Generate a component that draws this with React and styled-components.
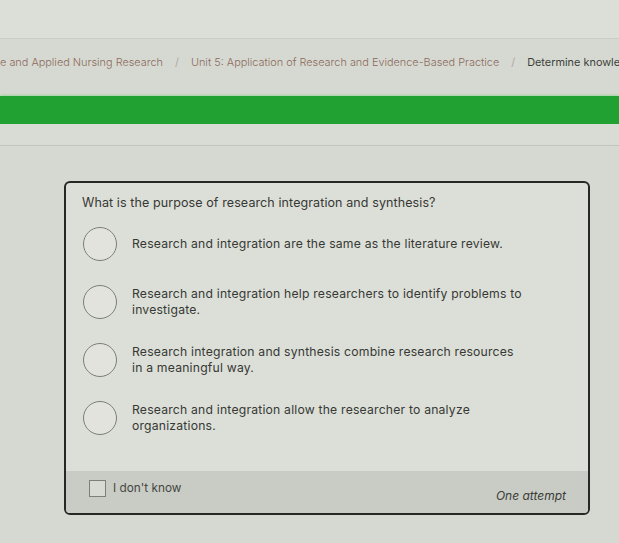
import styled, { createGlobalStyle } from 'styled-components';

const GlobalStyle = createGlobalStyle`
  html, body {
    margin: 0;
    padding: 0;
    background: #d6d9d1;
    font-family: Inter, Roboto, "Liberation Sans", Arial, sans-serif;
    overflow: hidden;
  }
`;

const Page = styled.div`
  width: 619px;
  height: 543px;
  overflow: hidden;
  background: #d6d9d1;
`;

const TopStrip = styled.div`
  height: 38px;
  background: #dcdfd8;
  border-bottom: 1px solid #cbcec6;
`;

const Breadcrumb = styled.nav`
  display: flex;
  align-items: center;
  gap: 12px;
  height: 46px;
  padding-bottom: 2px;
  white-space: nowrap;
  overflow: hidden;
  font-size: 10.9px;
`;

const Crumb = styled.span`
  color: ${props => (props.$current ? '#3d3f3c' : '#8c6a60')};
  font-weight: ${props => (props.$current ? 400 : 300)};
`;

const Separator = styled.span`
  color: #a8aaa4;
`;

const ProgressBar = styled.div`
  height: 28px;
  margin-top: 9px;
  background: #21a131;
  box-shadow: 0 0 3px rgba(60, 200, 70, 0.6);
`;

const Band = styled.div`
  height: 21px;
  border-bottom: 1px solid #c3c6be;
  background: #d9dcd4;
`;

const Card = styled.section`
  margin: 35px 0 0 64px;
  width: 522px;
  border: 2px solid #262825;
  border-radius: 6px;
  background: #dcdfd7;
  overflow: hidden;
`;

const Question = styled.p`
  margin: 0;
  padding: 12px 16px 0;
  font-size: 12.5px;
  letter-spacing: 0.1px;
  color: #363835;
`;

const Options = styled.div`
  display: flex;
  flex-direction: column;
  gap: 24px;
  padding: 17px 16px 36px 17px;
`;

const Option = styled.label`
  display: flex;
  align-items: center;
  gap: 15px;
`;

const Radio = styled.span`
  flex: none;
  width: 32px;
  height: 32px;
  border: 1.5px solid #7b7d78;
  border-radius: 50%;
  background: #e1e3dc;
`;

const OptionText = styled.span`
  font-size: 12.2px;
  line-height: 16px;
  letter-spacing: 0.2px;
  color: #363835;
`;

const Footer = styled.div`
  display: flex;
  align-items: center;
  justify-content: space-between;
  height: 42px;
  padding: 0 22px 0 23px;
  background: #c9ccc4;
`;

const DontKnow = styled.label`
  display: flex;
  align-items: center;
  gap: 7px;
  margin-top: -8px;
  font-size: 11.8px;
  color: #444643;
`;

const Checkbox = styled.span`
  width: 15px;
  height: 15px;
  border: 1.5px solid #7d7f7a;
  background: #d8dbd3;
`;

const Attempts = styled.span`
  margin-top: 6px;
  font-size: 12px;
  font-style: italic;
  color: #3a3c39;
`;

const options = [
  ['Research and integration are the same as the literature review.'],
  ['Research and integration help researchers to identify problems to', 'investigate.'],
  ['Research integration and synthesis combine research resources', 'in a meaningful way.'],
  ['Research and integration allow the researcher to analyze', 'organizations.'],
];

export default function App() {
  return (
    <Page>
      <GlobalStyle />
      <TopStrip />
      <Breadcrumb>
        <Crumb>e and Applied Nursing Research</Crumb>
        <Separator>/</Separator>
        <Crumb>Unit 5: Application of Research and Evidence-Based Practice</Crumb>
        <Separator>/</Separator>
        <Crumb $current>Determine knowledge</Crumb>
      </Breadcrumb>
      <ProgressBar />
      <Band />
      <Card>
        <Question>What is the purpose of research integration and synthesis?</Question>
        <Options>
          {options.map(lines => (
            <Option key={lines[0]}>
              <Radio />
              <OptionText>
                {lines.map((line, i) => (
                  <span key={line}>
                    {i > 0 && <br />}
                    {line}
                  </span>
                ))}
              </OptionText>
            </Option>
          ))}
        </Options>
        <Footer>
          <DontKnow>
            <Checkbox />
            I don't know
          </DontKnow>
          <Attempts>One attempt</Attempts>
        </Footer>
      </Card>
    </Page>
  );
}
